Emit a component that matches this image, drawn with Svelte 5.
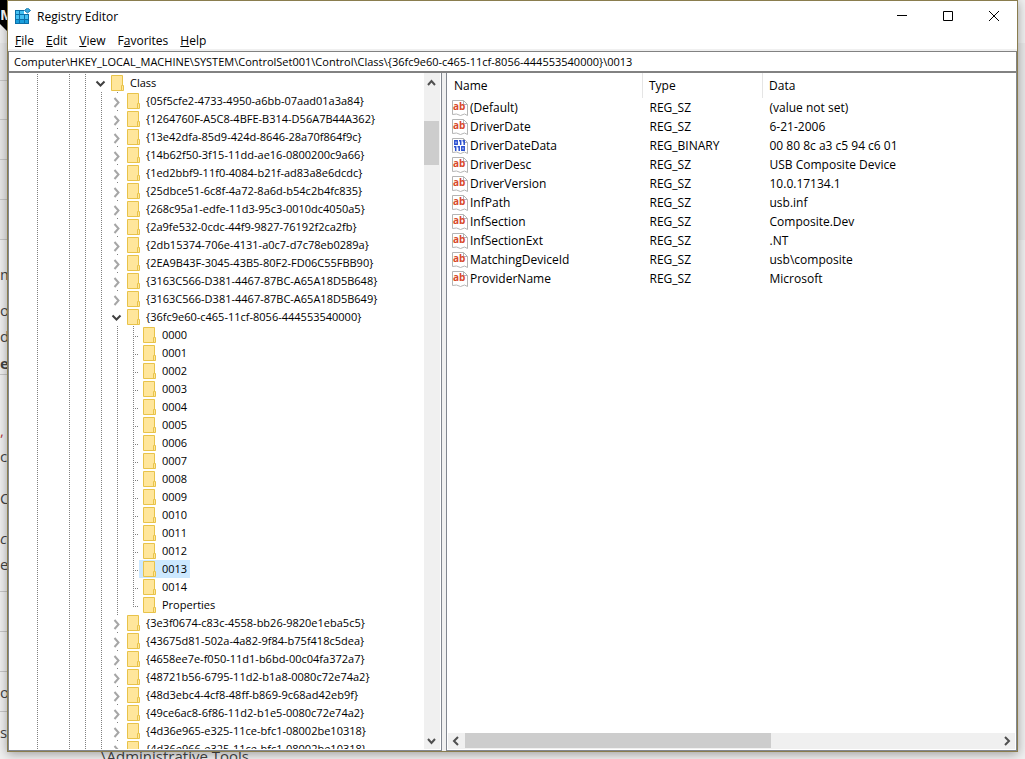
<script lang="ts">
	type Kind = 'branch' | 'open' | 'leaf';

	interface TreeNode {
		name: string;
		depth: number;
		kind: Kind;
		last?: boolean;
	}

	const before = [
		'{05f5cfe2-4733-4950-a6bb-07aad01a3a84}',
		'{1264760F-A5C8-4BFE-B314-D56A7B44A362}',
		'{13e42dfa-85d9-424d-8646-28a70f864f9c}',
		'{14b62f50-3f15-11dd-ae16-0800200c9a66}',
		'{1ed2bbf9-11f0-4084-b21f-ad83a8e6dcdc}',
		'{25dbce51-6c8f-4a72-8a6d-b54c2b4fc835}',
		'{268c95a1-edfe-11d3-95c3-0010dc4050a5}',
		'{2a9fe532-0cdc-44f9-9827-76192f2ca2fb}',
		'{2db15374-706e-4131-a0c7-d7c78eb0289a}',
		'{2EA9B43F-3045-43B5-80F2-FD06C55FBB90}',
		'{3163C566-D381-4467-87BC-A65A18D5B648}',
		'{3163C566-D381-4467-87BC-A65A18D5B649}'
	];

	const after = [
		'{3e3f0674-c83c-4558-bb26-9820e1eba5c5}',
		'{43675d81-502a-4a82-9f84-b75f418c5dea}',
		'{4658ee7e-f050-11d1-b6bd-00c04fa372a7}',
		'{48721b56-6795-11d2-b1a8-0080c72e74a2}',
		'{48d3ebc4-4cf8-48ff-b869-9c68ad42eb9f}',
		'{49ce6ac8-6f86-11d2-b1e5-0080c72e74a2}',
		'{4d36e965-e325-11ce-bfc1-08002be10318}',
		'{4d36e966-e325-11ce-bfc1-08002be10318}'
	];

	const numbered = Array.from({ length: 15 }, (_, i) => String(i).padStart(4, '0'));

	const branch = (name: string): TreeNode => ({ name, depth: 1, kind: 'branch' });
	const leaf = (name: string): TreeNode => ({ name, depth: 2, kind: 'leaf' });

	const nodes: TreeNode[] = [
		{ name: 'Class', depth: 0, kind: 'open' },
		...before.map(branch),
		{ name: '{36fc9e60-c465-11cf-8056-444553540000}', depth: 1, kind: 'open' },
		...numbered.map(leaf),
		{ ...leaf('Properties'), last: true },
		...after.map(branch)
	];

	// Ancestor columns to the left of "Class"; the second one has no siblings left.
	const ancestors = [true, false, true, true];

	const guides = (depth: number) => [...ancestors, ...Array(depth).fill(true)];

	const values = [
		['(Default)', 'REG_SZ', '(value not set)'],
		['DriverDate', 'REG_SZ', '6-21-2006'],
		['DriverDateData', 'REG_BINARY', '00 80 8c a3 c5 94 c6 01'],
		['DriverDesc', 'REG_SZ', 'USB Composite Device'],
		['DriverVersion', 'REG_SZ', '10.0.17134.1'],
		['InfPath', 'REG_SZ', 'usb.inf'],
		['InfSection', 'REG_SZ', 'Composite.Dev'],
		['InfSectionExt', 'REG_SZ', '.NT'],
		['MatchingDeviceId', 'REG_SZ', 'usb\\composite'],
		['ProviderName', 'REG_SZ', 'Microsoft']
	];

	const menus = [
		['', 'F', 'ile'],
		['', 'E', 'dit'],
		['', 'V', 'iew'],
		['F', 'a', 'vorites'],
		['', 'H', 'elp']
	];

	// Scraps of the page behind the window.
	const scraps = [
		{ text: 'm', top: 264 },
		{ text: 'o', top: 300 },
		{ text: 'ds', top: 326 },
		{ text: 'er', top: 353, bold: true },
		{ text: ',', top: 420, red: true },
		{ text: 'c', top: 446 },
		{ text: 'Cl', top: 488 },
		{ text: 'c', top: 528, italic: true },
		{ text: 'e', top: 554 },
		{ text: 'o', top: 682 },
		{ text: 's', top: 722 }
	];

	const rules = [80, 119, 159, 199, 239, 374, 591, 631, 671, 711];

	let selected = $state('0013');
	let path = $state(
		'Computer\\HKEY_LOCAL_MACHINE\\SYSTEM\\ControlSet001\\Control\\Class\\{36fc9e60-c465-11cf-8056-444553540000}\\0013'
	);
</script>

{#snippet arrow(d: string)}
	<svg width="16" height="16" viewBox="0 0 16 16" aria-hidden="true">
		<path {d} fill="none" stroke="#505050" stroke-width="2" />
	</svg>
{/snippet}

<div class="desktop">
	<div class="behind" aria-hidden="true">
		<div class="band"></div>
		{#each rules as top}
			<div class="rule" style="top: {top}px"></div>
		{/each}
		<svg class="badge" width="8" height="42" viewBox="0 0 8 42">
			<path d="M0 0h8v32L0 24z" fill="#000" />
		</svg>
		<span class="scrap initial">M</span>
		{#each scraps as s}
			<span class="scrap" class:bold={s.bold} class:red={s.red} class:italic={s.italic} style="top: {s.top}px">{s.text}</span>
		{/each}
		<span class="footnote">\Administrative Tools</span>
	</div>

	<main class="window">
		<header class="titlebar">
			<svg class="logo" width="16" height="16" viewBox="0 0 16 16" aria-hidden="true">
				<path d="M0 2h9v4h5v10H0z" fill="#0b6fa8" />
				<path d="M1 3h3v3H1zM5 3h4v3H5zM1 7h3v4H1zM5 7h4v4H5zM10 7h3v4h-3z" fill="#45c0f2" />
				<path d="M1 12h3v3H1zM5 12h4v3H5zM10 12h3v3h-3z" fill="#1a9edc" />
				<path d="M12.500 0L15.500 2.500L12.500 5L9.500 2.500z" fill="#3aa8dc" stroke="#1579ad" />
			</svg>
			<h1>Registry Editor</h1>
			<div class="controls">
				<button aria-label="Minimize">
					<svg width="10" height="10" viewBox="0 0 10 10"><path d="M0 4.500h10" stroke="#000" /></svg>
				</button>
				<button aria-label="Maximize">
					<svg width="10" height="10" viewBox="0 0 10 10"><path d="M.5.5h9v9h-9z" fill="none" stroke="#000" /></svg>
				</button>
				<button aria-label="Close">
					<svg width="10" height="10" viewBox="0 0 10 10"><path d="M0 0l10 10M10 0L0 10" stroke="#000" /></svg>
				</button>
			</div>
		</header>

		<nav class="menubar">
			{#each menus as [pre, key, post]}
				<button>{pre}<u>{key}</u>{post}</button>
			{/each}
		</nav>

		<input class="address" aria-label="Address" bind:value={path} />

		<div class="panes">
			<section class="pane tree-pane">
				<ul class="tree">
					{#each nodes as node}
						<li>
							{#each guides(node.depth).slice(0, node.kind === 'leaf' ? -1 : undefined) as line}
								<span class="guide" class:line></span>
							{/each}
							{#if node.kind === 'leaf'}
								<span class="guide line"></span>
								<span class="elbow" class:last={node.last}></span>
							{:else}
								<span class="toggle" class:stub={node.kind === 'branch'}>
									<svg width="14" height="18" viewBox="0 0 14 18" aria-hidden="true">
										{#if node.kind === 'open'}
											<path d="M3.500 7.500l4 4l4-4" fill="none" stroke="#404040" stroke-width="2" />
										{:else}
											<path d="M5.500 6l4 4.500l-4 4.500" fill="none" stroke="#a6a6a6" stroke-width="2" />
										{/if}
									</svg>
								</span>
							{/if}
							<button class="node" class:selected={selected === node.name} onclick={() => (selected = node.name)}>
								<svg width="13" height="16" viewBox="0 0 13 16" aria-hidden="true">
									<path d="M.5.5h11v10h1v5H.5z" fill="#ffe69b" stroke="#e8c34a" />
									<path d="M10.500 15v-4.500h1" fill="none" stroke="#e8c34a" />
								</svg>
								<span>{node.name}</span>
							</button>
						</li>
					{/each}
				</ul>
				<div class="vscroll">
					{@render arrow('M4 10l3.500-4l3.500 4')}
					<div class="vthumb"></div>
					{@render arrow('M4 6l3.500 4l3.500-4')}
				</div>
			</section>

			<section class="pane value-pane">
				<div class="values">
					<table>
						<thead>
							<tr><th class="name">Name</th><th class="type">Type</th><th>Data</th></tr>
						</thead>
						<tbody>
							{#each values as [name, type, data]}
								<tr>
									<td>
										<div class="value-name">
											<svg width="16" height="16" viewBox="0 0 16 16" aria-hidden="true">
												<path d="M.5.5h11l4 4v11l-3-1.500l-4 1.500l-4-1.500l-4 .5z" fill="#fff" stroke="#b4b4b4" />
												<path d="M11.500.5v4h4" fill="none" stroke="#b4b4b4" />
												{#if type === 'REG_BINARY'}
													<g fill="none" stroke="#2a4fd0" stroke-width="1.500">
														<path d="M2.800 2.800h2.400v3.400H2.800zM7 2.800h1.700V7M10.500 2.800h1.700V7M2 8.800h1.700V13M5.500 8.800h1.700V13M9.800 8.800h2.400v3.400H9.800z" />
													</g>
												{:else}
													<text x="1" y="10">ab</text>
												{/if}
											</svg>
											<span>{name}</span>
										</div>
									</td>
									<td>{type}</td>
									<td>{data}</td>
								</tr>
							{/each}
						</tbody>
					</table>
				</div>
				<div class="hscroll">
					{@render arrow('M10 4l-4 4l4 4')}
					<div class="hthumb"></div>
					{@render arrow('M6 4l4 4l-4 4')}
				</div>
			</section>
		</div>
	</main>
</div>

<style>
	:global(body) {
		margin: 0;
		overflow: hidden;
	}
	.desktop {
		position: relative;
		box-sizing: border-box;
		height: 100vh;
		padding: 0 7px 7px;
		overflow: hidden;
		background: #f0f0f0;
		font-family: 'Open Sans', 'Segoe UI', sans-serif;
		font-size: 12px;
		color: #000;
	}
	.behind {
		position: absolute;
		inset: 0;
		font-size: 15px;
		line-height: 20px;
		color: #444;
	}
	.band {
		margin-top: 43px;
		height: 197px;
		background: #e8e8e8;
	}
	.badge,
	.rule,
	.scrap,
	.footnote {
		position: absolute;
		left: 0;
		white-space: nowrap;
	}
	.badge {
		top: 0;
	}
	.rule {
		width: 8px;
		height: 1px;
		background: #c8c8c8;
	}
	.scrap.initial {
		top: 4px;
		color: #fff;
		font-weight: 700;
	}
	.scrap.bold {
		font-weight: 700;
	}
	.scrap.red {
		color: #b04040;
	}
	.scrap.italic {
		font-style: italic;
	}
	.footnote {
		left: 101px;
		top: 746px;
	}
	.window {
		position: relative;
		box-sizing: border-box;
		height: 100%;
		display: flex;
		flex-direction: column;
		border: 1px solid #8a7d4e;
		background: #fff;
		box-shadow: 0 2px 10px rgba(0, 0, 0, 0.35);
	}
	button {
		padding: 0;
		border: 0;
		background: none;
		color: inherit;
		font: inherit;
	}
	.titlebar {
		display: flex;
		align-items: center;
		height: 30px;
		padding-left: 7px;
	}
	h1 {
		flex: 1;
		margin: 0 0 0 6px;
		font-size: 12px;
		font-weight: 400;
	}
	.controls {
		display: flex;
		height: 28px;
	}
	.controls button {
		width: 46px;
		display: flex;
		align-items: center;
		justify-content: center;
	}
	.menubar {
		display: flex;
		gap: 12px;
		height: 18px;
		padding: 0 7px;
		border-bottom: 2px solid #f0f0f0;
	}
	.address {
		box-sizing: border-box;
		width: 100%;
		height: 22px;
		padding: 0 5px;
		border: 1px solid #828282;
		border-bottom-width: 2px;
		background: #fff;
		font: inherit;
		font-size: 11px;
		outline: none;
	}
	.panes {
		flex: 1;
		min-height: 0;
		display: flex;
		gap: 4px;
		background: #f0f0f0;
	}
	.pane {
		box-sizing: border-box;
		display: flex;
		border: 1px solid #828790;
		border-top: 0;
		background: #fff;
		overflow: hidden;
	}
	.tree-pane {
		width: 434px;
		padding: 0 1px 1px 0;
	}
	.tree {
		flex: 1;
		margin: 0;
		padding: 1px 0 0 20px;
		list-style: none;
		font-size: 11px;
		overflow: hidden;
	}
	li {
		display: flex;
		height: 18px;
	}
	.guide,
	.toggle,
	.elbow {
		flex: none;
		width: 16px;
	}
	.line,
	.elbow {
		background: repeating-linear-gradient(#808080 0 1px, transparent 1px 2px) 8px 0 / 1px 100% no-repeat;
	}
	.toggle,
	.elbow {
		width: 14px;
	}
	.elbow {
		background:
			repeating-linear-gradient(90deg, #808080 0 1px, transparent 1px 2px) 8px 10px / 6px 1px no-repeat,
			repeating-linear-gradient(#808080 0 1px, transparent 1px 2px) 8px 0 / 1px 100% no-repeat;
	}
	.elbow.last {
		background-size:
			6px 1px,
			1px 10px;
	}
	.stub {
		background: linear-gradient(#808080, #808080) 8px 0 / 1px 1px no-repeat;
	}
	.node {
		display: flex;
		align-items: center;
		gap: 6px;
		padding: 0 3px 0 4px;
		line-height: 18px;
		white-space: nowrap;
	}
	.node.selected {
		background: #cce8ff;
	}
	.vscroll {
		display: flex;
		flex-direction: column;
		width: 16px;
		padding-top: 2px;
		background: #f0f0f0;
	}
	.vthumb {
		width: 15px;
		height: 44px;
		margin: 30px 0 auto;
		background: #cdcdcd;
	}
	.value-pane {
		flex: 1;
		min-width: 0;
		flex-direction: column;
		padding: 0 1px 1px;
	}
	.values {
		flex: 1;
		overflow: hidden;
	}
	table {
		width: 100%;
		border-collapse: collapse;
		table-layout: fixed;
		line-height: 19px;
	}
	th {
		height: 25px;
		padding: 0 6px;
		border-left: 1px solid #e5e5e5;
		font-weight: 400;
		text-align: left;
	}
	th.name {
		width: 182px;
		border-left: 0;
	}
	th.type {
		width: 107px;
	}
	td {
		height: 19px;
		padding: 0 7px;
		white-space: nowrap;
	}
	td:first-child {
		padding: 0 4px;
	}
	.value-name {
		display: flex;
		align-items: center;
		gap: 2px;
	}
	.value-name text {
		font: 700 10px 'Open Sans', sans-serif;
		fill: #d8492b;
	}
	.hscroll {
		display: flex;
		height: 16px;
		background: #f0f0f0;
	}
	.hthumb {
		width: 54%;
		height: 15px;
		margin: 0 auto 0 1px;
		background: #cdcdcd;
	}
</style>
